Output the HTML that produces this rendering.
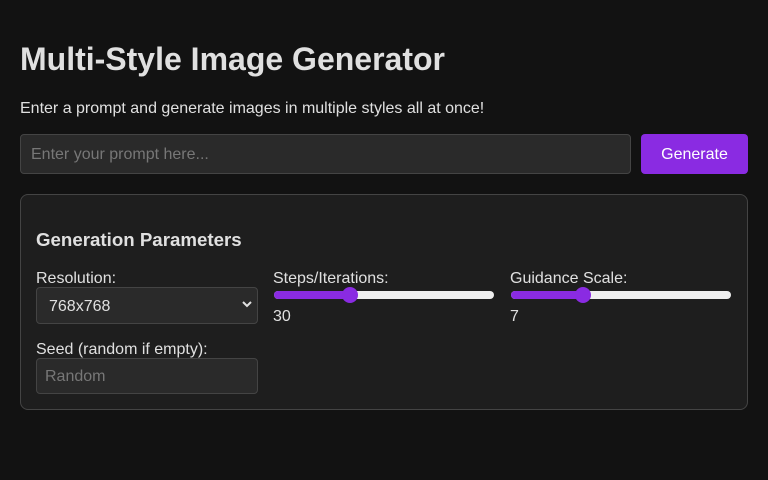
<!DOCTYPE html>
<html><head><style>
*{box-sizing:border-box;margin:0;padding:0}
body{width:768px;height:480px;background:#121212;color:#e0e0e0;font-family:"Liberation Sans",sans-serif;position:relative;overflow:hidden}
.a{position:absolute}
h1{position:absolute;left:20px;top:41px;font-size:32px;font-weight:bold;color:#e0e0e0}
.box{border:1px solid #444;border-radius:4px;background:#2a2a2a}
.lbl{font-size:16px;color:#e0e0e0}
.track{position:absolute;height:8px;border-radius:4px;background:#efefef}
.fill{position:absolute;left:0;top:0;height:8px;border-radius:4px;background:#8a2be2}
.thumb{position:absolute;width:16px;height:16px;border-radius:50%;background:#8a2be2;top:-4px}
</style></head><body>
<h1>Multi-Style Image Generator</h1>
<div class="a" style="left:20px;top:100px;font-size:16px">Enter a prompt and generate images in multiple styles all at once!</div>
<div class="a box" style="left:20px;top:134px;width:611px;height:40px;"></div>
<div class="a" style="left:31px;top:146px;font-size:16px;color:#777">Enter your prompt here...</div>
<div class="a" style="left:641px;top:134px;width:107px;height:40px;background:#8a2be2;border-radius:4px;color:#fff;font-size:16px;text-align:center;line-height:41px">Generate</div>
<div class="a" style="left:20px;top:194px;width:728px;height:216px;border:1px solid #444;border-radius:8px;background:#1e1e1e"></div>
<div class="a" style="left:36px;top:229px;font-size:18.7px;font-weight:bold">Generation Parameters</div>
<div class="a lbl" style="left:36px;top:270px">Resolution:</div>
<div class="a box" style="left:36px;top:287px;width:222px;height:37px"></div>
<div class="a" style="left:49px;top:298px;font-size:16px">768x768</div>
<svg class="a" style="left:242px;top:300px" width="10" height="8"><path d="M1 2l4 4 4-4" stroke="#e0e0e0" stroke-width="2" fill="none"/></svg>
<div class="a lbl" style="left:273px;top:270px">Steps/Iterations:</div>
<div class="track" style="left:274px;top:291px;width:220px"><div class="fill" style="width:76px"></div><div class="thumb" style="left:68px"></div></div>
<div class="a lbl" style="left:273px;top:308px">30</div>
<div class="a lbl" style="left:510px;top:270px">Guidance Scale:</div>
<div class="track" style="left:511px;top:291px;width:220px"><div class="fill" style="width:72px"></div><div class="thumb" style="left:64px"></div></div>
<div class="a lbl" style="left:510px;top:308px">7</div>
<div class="a lbl" style="left:36px;top:341px">Seed (random if empty):</div>
<div class="a box" style="left:36px;top:358px;width:222px;height:36px"></div>
<div class="a" style="left:45px;top:368px;font-size:16px;color:#777">Random</div>
</body></html>
